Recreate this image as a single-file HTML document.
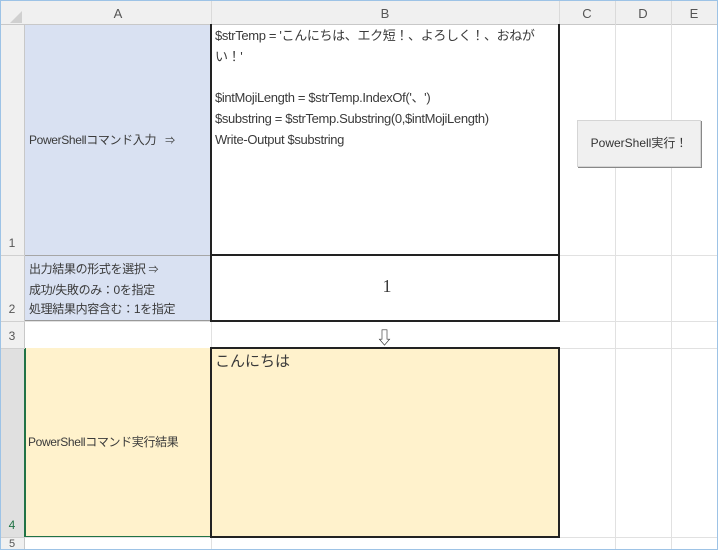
<!DOCTYPE html>
<html><head><meta charset="utf-8"><style>
*{margin:0;padding:0;box-sizing:border-box}
body{width:718px;height:550px;overflow:hidden;background:#fff;font-family:"Liberation Sans","Noto Sans CJK JP",sans-serif;color:#3a3a3a;position:relative}
.a{position:absolute}
.hdr{background:#f0f0f0;color:#555;font-size:13px;text-align:center}
.vl{position:absolute;width:1px;background:#e1e1e1}
.hl{position:absolute;height:1px;background:#e1e1e1}
.n{letter-spacing:-0.35px}
</style></head><body>
<div class="a" style="left:0;top:0;width:718px;height:550px;border:1px solid #9dc3e6"></div>
<div class="a hdr" style="left:1px;top:1px;width:716px;height:24px;border-bottom:1px solid #c8c8c8"></div>
<svg class="a" style="left:9px;top:11px" width="14" height="12"><polygon points="13,0 13,12 1,12" fill="#d0d0d0"/></svg>
<div class="a hdr" style="left:25px;top:6px;width:186px;background:none">A</div>
<div class="a hdr" style="left:211px;top:6px;width:348px;background:none">B</div>
<div class="a hdr" style="left:559px;top:6px;width:56px;background:none">C</div>
<div class="a hdr" style="left:615px;top:6px;width:56px;background:none">D</div>
<div class="a hdr" style="left:671px;top:6px;width:46px;background:none">E</div>
<div class="vl" style="left:211px;top:1px;height:24px;background:#dadada"></div>
<div class="vl" style="left:559px;top:1px;height:24px;background:#dadada"></div>
<div class="vl" style="left:615px;top:1px;height:24px;background:#dadada"></div>
<div class="vl" style="left:671px;top:1px;height:24px;background:#dadada"></div>
<div class="a hdr" style="left:1px;top:25px;width:24px;height:524px;border-right:1px solid #c8c8c8"></div>
<div class="a" style="left:1px;top:348px;width:24px;height:189px;background:#e0e0e0;border-right:1px solid #217346"></div>
<div class="a hdr" style="left:1px;top:236px;width:22px;background:none;font-size:12px">1</div>
<div class="a hdr" style="left:1px;top:302px;width:22px;background:none;font-size:12px">2</div>
<div class="a hdr" style="left:1px;top:329px;width:22px;background:none;font-size:12px">3</div>
<div class="a hdr" style="left:1px;top:518px;width:22px;background:none;font-size:12px;color:#217346">4</div>
<div class="a hdr" style="left:1px;top:538px;width:22px;background:none;font-size:11px">5</div>
<div class="hl" style="left:1px;top:255px;width:24px;background:#d0d0d0"></div>
<div class="hl" style="left:1px;top:321px;width:24px;background:#d0d0d0"></div>
<div class="hl" style="left:1px;top:348px;width:24px;background:#d0d0d0"></div>
<div class="hl" style="left:1px;top:537px;width:24px;background:#d0d0d0"></div>
<div class="vl" style="left:615px;top:25px;height:524px"></div>
<div class="vl" style="left:671px;top:25px;height:524px"></div>
<div class="vl" style="left:211px;top:321px;height:27px"></div>
<div class="vl" style="left:211px;top:537px;height:12px"></div>
<div class="hl" style="left:559px;top:255px;width:158px"></div>
<div class="hl" style="left:25px;top:321px;width:692px"></div>
<div class="hl" style="left:559px;top:348px;width:158px"></div>
<div class="hl" style="left:25px;top:537px;width:692px"></div>
<div class="a" style="left:25px;top:25px;width:186px;height:296px;background:#d9e1f2;border-bottom:1px solid #999"></div>
<div class="hl" style="left:25px;top:255px;width:186px;background:#a6a6a6"></div>
<div class="a n" style="left:29px;top:131px;font-size:12px;white-space:nowrap">PowerShellコマンド入力 &nbsp;&nbsp;<span style="font-size:10px">⇒</span></div>
<div class="a n" style="left:29px;top:260px;font-size:12px;line-height:19.5px;white-space:nowrap">出力結果の形式を選択 <span style="font-size:10px">⇒</span><br>成功/失敗のみ：0を指定<br>処理結果内容含む：1を指定</div>
<div class="a" style="left:210px;top:24px;width:350px;height:232px;border:2px solid #222;border-top:none"></div>
<div class="a" style="left:210px;top:254px;width:350px;height:68px;border:2px solid #222"></div>
<div class="a n" style="left:215px;top:26px;font-size:13px;line-height:20.8px;white-space:nowrap">$strTemp = 'こんにちは、エク短！、よろしく！、おねが<br>い！'<br><br>$intMojiLength = $strTemp.IndexOf('、')<br>$substring = $strTemp.Substring(0,$intMojiLength)<br>Write-Output $substring</div>
<div class="a" style="left:370px;top:276px;width:34px;text-align:center;font-size:18px;font-family:'Liberation Serif',serif">1</div>
<div class="a" style="left:376px;top:324px;font-size:17px;color:#333">⇩</div>
<div class="a" style="left:25px;top:348px;width:186px;height:189px;background:#fff2cc;border-left:1px solid #217346;border-bottom:1px solid #217346"></div>
<div class="a" style="left:210px;top:347px;width:350px;height:191px;background:#fff2cc;border:2px solid #222"></div>
<div class="a n" style="left:28px;top:433px;font-size:12px;white-space:nowrap">PowerShellコマンド実行結果</div>
<div class="a" style="left:215px;top:350px;font-size:15px;white-space:nowrap">こんにちは</div>
<div class="a" style="left:577px;top:120px;width:124px;height:47px;background:#f0f0f0;border:1px solid #d5d5d5;box-shadow:1px 1px 0 #888;font-size:12px;text-align:center;line-height:45px;color:#333">PowerShell実行！</div>
</body></html>
